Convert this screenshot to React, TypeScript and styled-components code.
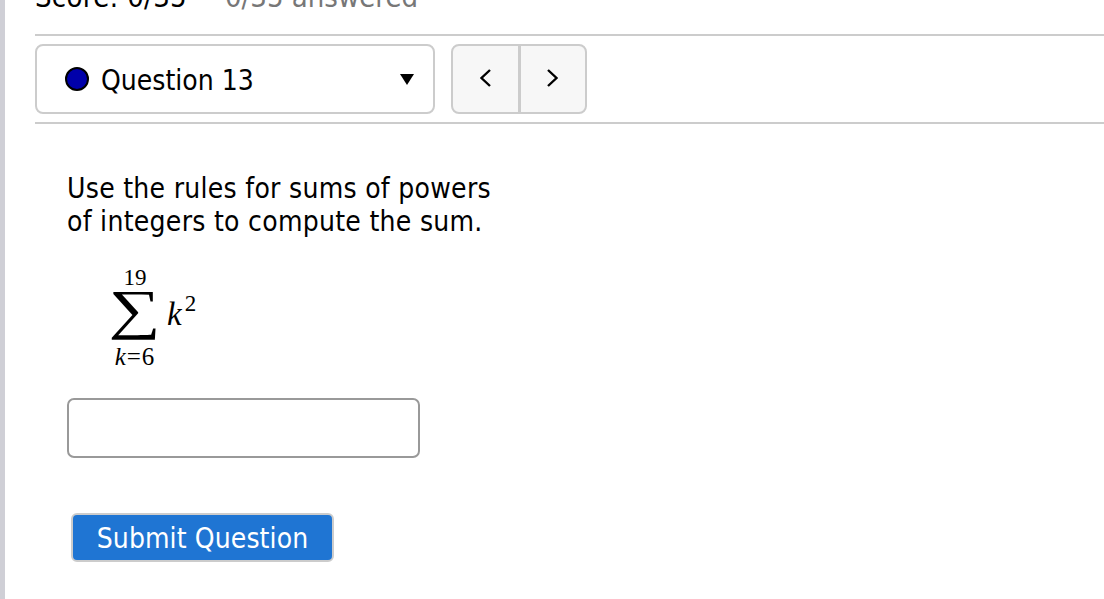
import React from 'react';
import styled, {createGlobalStyle} from "styled-components";

const GlobalStyle = createGlobalStyle`
  html, body {
    margin: 0;
    padding: 0;
    height: 100%;
    background: #fff;
    overflow: hidden;
  }
  body {
    font-family: 'DejaVu Sans Condensed', 'DejaVu Sans', sans-serif;
    font-stretch: condensed;
    color: #000;
  }
`

export default function App() {
    return (
        <Page>
            <GlobalStyle/>
            <ScoreBar>
                <Score>Score: 0/35</Score>
                <Answered>0/35 answered</Answered>
            </ScoreBar>
            <NavRow>
                <QuestionSelect>
                    <StatusDot/>
                    <QuestionLabel>Question 13</QuestionLabel>
                    <Caret/>
                </QuestionSelect>
                <Pager>
                    <PagerButton aria-label="Previous">
                        <Chevron viewBox="0 0 14 20"><path d="M12 2 L3.5 10 L12 18"/></Chevron>
                    </PagerButton>
                    <PagerButton aria-label="Next">
                        <Chevron viewBox="0 0 14 20"><path d="M2 2 L10.5 10 L2 18"/></Chevron>
                    </PagerButton>
                </Pager>
            </NavRow>
            <Body>
                <Prompt>Use the rules for sums of powers<br/>of integers to compute the sum.</Prompt>
                <MathBlock>
                    <Limits>
                        <Upper>19</Upper>
                        <Sigma>∑</Sigma>
                        <Lower><i>k</i>=6</Lower>
                    </Limits>
                    <Term><i>k</i><sup>2</sup></Term>
                </MathBlock>
                <Answer type="text"/>
                <Submit>Submit Question</Submit>
            </Body>
        </Page>
    );
}

const Page = styled.div`
  height: 599px;
  border-left: 5px solid #cfcfd6;
  padding-left: 30px;
  box-sizing: border-box;
  overflow: hidden;
`
const ScoreBar = styled.div`
  height: 34px;
  display: flex;
  gap: 38px;
  align-items: flex-end;
  overflow: hidden;
  box-sizing: border-box;
  font-size: 29px;
  line-height: 74px;
`
const Score = styled.span`
  letter-spacing: 0.3px;
`
const Answered = styled.span`
  color: #777;
`
const NavRow = styled.div`
  display: flex;
  gap: 16px;
  padding: 8px 0;
  border-top: 2px solid #ccc;
  border-bottom: 2px solid #ccc;
`
const QuestionSelect = styled.div`
  width: 400px;
  height: 70px;
  box-sizing: border-box;
  border: 2px solid #ccc;
  border-radius: 8px;
  display: flex;
  align-items: center;
  padding: 0 19px 0 28px;
  background: #fff;
`
const StatusDot = styled.span`
  width: 24px;
  height: 24px;
  box-sizing: border-box;
  border-radius: 50%;
  background: #0000aa;
  border: 2px solid #000;
`
const QuestionLabel = styled.span`
  margin-left: 12px;
  padding-top: 2px;
  font-size: 28px;
  flex: 1;
`
const Caret = styled.span`
  width: 0;
  height: 0;
  border-left: 7px solid transparent;
  border-right: 7px solid transparent;
  border-top: 11px solid #000;
`
const Pager = styled.div`
  width: 136px;
  height: 70px;
  box-sizing: border-box;
  border: 2px solid #ccc;
  border-radius: 8px;
  background: #f7f7f7;
  display: flex;
  overflow: hidden;
`
const PagerButton = styled.button`
  flex: 1;
  border: 0;
  background: transparent;
  padding: 0 0 2px;
  display: flex;
  align-items: center;
  justify-content: center;
  & + & {
    border-left: 3px solid #ccc;
  }
`
const Chevron = styled.svg`
  width: 14px;
  height: 20px;
  fill: none;
  stroke: #000;
  stroke-width: 2.4;
`
const Body = styled.div`
  padding: 48px 0 0 32px;
`
const Prompt = styled.p`
  margin: 0;
  font-size: 28px;
  line-height: 33px;
  letter-spacing: 0.28px;
`
const MathBlock = styled.div`
  display: flex;
  align-items: center;
  margin: 27px 0 0 44px;
  font-family: 'Liberation Serif', serif;
  font-stretch: normal;
  height: 103px;
`
const Limits = styled.div`
  display: flex;
  flex-direction: column;
  align-items: center;
  width: 48px;
`
const Upper = styled.div`
  font-size: 23px;
  line-height: 23px;
`
const Sigma = styled.div`
  font-size: 55px;
  line-height: 42px;
  height: 56px;
  transform: scaleX(1.33);
`
const Lower = styled.div`
  font-size: 25px;
  line-height: 23px;
  letter-spacing: 1px;
  white-space: nowrap;
`
const Term = styled.div`
  font-size: 33px;
  margin: -4px 0 0 8px;
  sup {
    font-size: 23px;
    line-height: 0;
    margin-left: 3px;
    vertical-align: 14px;
  }
`
const Answer = styled.input`
  display: block;
  width: 353px;
  height: 60px;
  box-sizing: border-box;
  margin-top: 30px;
  border: 2px solid #999;
  border-radius: 7px;
  background: #fff;
`
const Submit = styled.button`
  display: block;
  margin: 55px 0 0 4px;
  width: 263px;
  height: 49px;
  box-sizing: border-box;
  border: 2px solid #ccc;
  border-radius: 6px;
  background: #1f75d3;
  color: #fff;
  font-family: inherit;
  font-stretch: inherit;
  font-size: 28px;
  letter-spacing: 0.1px;
  padding: 2px 0 0;
`
